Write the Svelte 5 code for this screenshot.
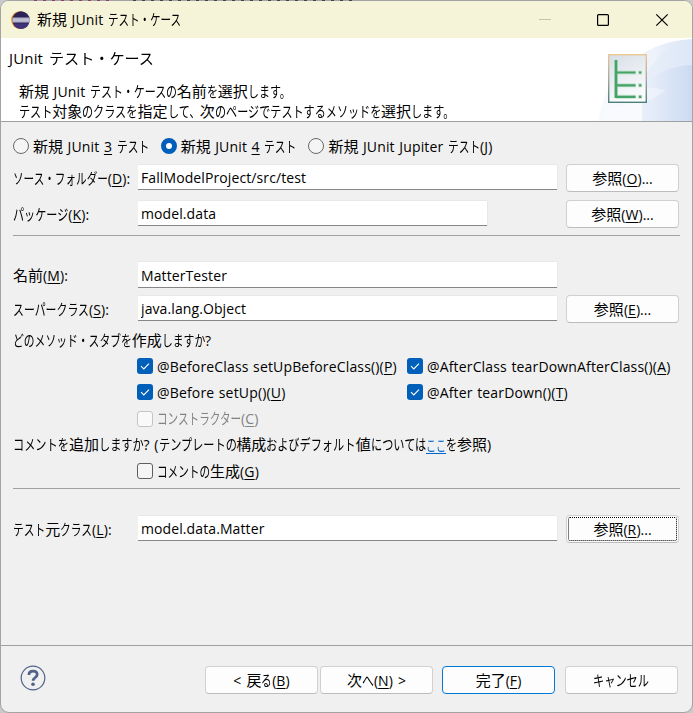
<script lang="ts">
	type Run = { text: string; kind: 'kana' | 'kanji' | 'latin' | 'key' };

	let version = $state('4');
	let sourceFolder = $state('FallModelProject/src/test');
	let packageName = $state('model.data');
	let name = $state('MatterTester');
	let superclass = $state('java.lang.Object');
	let classUnderTest = $state('model.data.Matter');

	const versions = [
		{ id: '3', label: '新規 JUnit &3 テスト' },
		{ id: '4', label: '新規 JUnit &4 テスト' },
		{ id: '5', label: '新規 JUnit Jupiter テスト(&J)' }
	];

	let stubs = $state([
		[
			{ label: '@BeforeClass setUpBeforeClass()(&P)', checked: true, disabled: false },
			{ label: '@AfterClass tearDownAfterClass()(&A)', checked: true, disabled: false }
		],
		[
			{ label: '@Before setUp()(&U)', checked: true, disabled: false },
			{ label: '@After tearDown()(&T)', checked: true, disabled: false }
		],
		[{ label: 'コンストラクター(&C)', checked: false, disabled: true }]
	]);
	let comments = $state({ label: 'コメントの生成(&G)', checked: false, disabled: false });

	// "&" marks the mnemonic letter; kana is set narrower than kanji
	function runs(text: string): Run[] {
		const parts = text.match(/&.|[\u3001-\u30ff]+|[\u3400-\u9fff]+|[^&\u3001-\u9fff]+/g) ?? [];
		return parts.map((part) => {
			if (part[0] === '&') return { text: part[1], kind: 'key' };
			if (/[\u3001-\u30ff]/.test(part)) return { text: part, kind: 'kana' };
			if (/[\u3400-\u9fff]/.test(part)) return { text: part, kind: 'kanji' };
			return { text: part, kind: 'latin' };
		});
	}
</script>

{#snippet label(text: string, pitch = 10.7)}
	<span class="label">{#each runs(text) as run}{#if run.kind === 'kana'}<span class="kana" style:--n={run.text.length} style:--pitch={pitch}>{run.text}</span>{:else}<span class={run.kind}>{run.text}</span>{/if}{/each}</span>
{/snippet}

{#snippet check(item: { label: string; checked: boolean; disabled: boolean }, pitch = 10.6)}
	<label class={['check', item.disabled && 'disabled']}>
		<input type="checkbox" bind:checked={item.checked} disabled={item.disabled} />
		<span class="box">
			{#if item.checked}
				<svg width="16" height="16" viewBox="0 0 16 16"><path d="M4 8.2 6.8 11 12 5.6" /></svg>
			{/if}
		</span>
		{@render label(item.label, pitch)}
	</label>
{/snippet}

<div class="desktop">
	<div class="window">
		<header class="titlebar">
			<svg class="eclipse" width="19" height="18" viewBox="0 0 19 18">
				<circle cx="8.8" cy="9" r="8.7" fill="#f7941e" />
				<circle cx="10" cy="9" r="8.7" fill="#2c2255" />
				<path d="M2 12.4h16a8.7 8.7 0 0 1-16 0z" fill="#41337a" />
				<path d="M1.5 6.4h17v5h-17z" fill="#b5b2cc" />
				<path d="M1.4 8.4h17.4v1H1.4z" fill="#c9c8da" />
			</svg>
			<h1>{@render label('新規 JUnit テスト・ケース', 10.5)}</h1>
			<svg class="controls" width="132" height="14" viewBox="0 0 132 14">
				<path d="M1 6.5h12" stroke="#c3c2ad" />
				<rect x="59.6" y="1.6" width="10.8" height="10.8" rx="1" />
				<path d="m118.3 1.3 11.4 11.4m0-11.4-11.4 11.4" />
			</svg>
		</header>

		<section class="banner">
			<svg class="waves" width="96" height="83" viewBox="0 0 96 83">
				<defs>
					<linearGradient id="wave">
						<stop offset="0" stop-color="#f9fbfe" />
						<stop offset=".6" stop-color="#edf2fb" />
						<stop offset="1" stop-color="#dbe5f6" />
					</linearGradient>
					<linearGradient id="wave-front">
						<stop offset="0" stop-color="#f6f9fe" />
						<stop offset=".55" stop-color="#e6edfa" />
						<stop offset="1" stop-color="#ccdaf2" />
					</linearGradient>
				</defs>
				<path d="M2 83C8 40 42 4 96 1v82z" fill="url(#wave)" />
				<path d="M45 46C58 20 74 5 96 1v26C76 28 60 34 45 46z" fill="#e0e9f8" opacity=".5" />
				<path d="M44 48C60 34 76 28 96 27v56H3l2-11C16 72 36 69 46 65 56 61 64 57 70 52z" fill="url(#wave-front)" />
				<path d="M3 83C8 66 30 66 46 65v18z" fill="#f8fafe" />
			</svg>
			<div class="banner-text">
				<h2>{@render label('JUnit テスト・ケース', 15.1)}</h2>
				<p>{@render label('新規 JUnit テスト・ケースの名前を選択します。', 10.95)}</p>
				<p>{@render label('テスト対象のクラスを指定して、次のページでテストするメソッドを選択します。', 11.1)}</p>
			</div>
			<svg class="page-icon" width="39" height="49" viewBox="0 0 39 49">
				<defs>
					<linearGradient id="sheet" x2="0.4" y2="1">
						<stop offset="0" stop-color="#d8dde7" />
						<stop offset="1" stop-color="#fafbfd" />
					</linearGradient>
					<linearGradient id="edge" x2="0" y2="1">
						<stop offset="0" stop-color="#ecc895" />
						<stop offset=".5" stop-color="#a8aaa0" />
						<stop offset="1" stop-color="#4d8078" />
					</linearGradient>
				</defs>
				<rect x=".7" y=".7" width="37.6" height="47.6" fill="url(#sheet)" stroke="url(#edge)" stroke-width="1.4" />
				<path d="M8 6v38M8 18.5h20M8 31.3h20M8 42.8h20" stroke="#c3e2cf" stroke-width="4" />
				<path d="M30 18.5h4M30 31.3h4M30 42.8h4" stroke="#c3e2cf" stroke-width="4" />
				<path d="M8 6v38" stroke="#46a367" stroke-width="2.6" />
				<path d="M8 18.5h19.5M8 31.3h19.5M8 42.8h19.5M31 18.5h2.4M31 31.3h2.4M31 42.8h2.4" stroke="#46a367" stroke-width="2.2" />
			</svg>
		</section>

		<main>
			<div class="versions">
				{#each versions as item}
					<label class="radio">
						<input type="radio" name="version" value={item.id} bind:group={version} />
						<span class="dot"></span>
						{@render label(item.label)}
					</label>
				{/each}
			</div>

			<div class="row">
				<span class="caption">{@render label('ソース・フォルダー(&D):', 10.6)}</span>
				<input class="field" bind:value={sourceFolder} />
				<button>{@render label('参照(&O)...')}</button>
			</div>
			<div class="row">
				<span class="caption">{@render label('パッケージ(&K):', 11.1)}</span>
				<input class="field short" bind:value={packageName} />
				<button>{@render label('参照(&W)...')}</button>
			</div>

			<hr />

			<div class="row name">
				<span class="caption">{@render label('名前(&M):')}</span>
				<input class="field" bind:value={name} />
			</div>
			<div class="row superclass">
				<span class="caption">{@render label('スーパークラス(&S):', 10.9)}</span>
				<input class="field" bind:value={superclass} />
				<button>{@render label('参照(&E)...')}</button>
			</div>

			<div class="question stub-question">{@render label('どのメソッド・スタブを作成しますか?', 10.8)}</div>
			<div class="stubs">
				{#each stubs as row}
					<div class="stub-row">
						{#each row as item}
							{@render check(item)}
						{/each}
					</div>
				{/each}
			</div>

			<div class="question">
				{@render label('コメントを追加しますか? (テンプレートの構成およびデフォルト値については', 11.17)}<a href="#templates">{@render label('ここ', 10)}</a>{@render label('を参照)', 11)}
			</div>
			<div class="stub-row comments">{@render check(comments)}</div>

			<hr class="second" />

			<div class="row tested">
				<span class="caption">{@render label('テスト元クラス(&L):', 10.7)}</span>
				<input class="field" bind:value={classUnderTest} />
				<button class="focused">{@render label('参照(&R)...')}</button>
			</div>
		</main>

		<footer>
			<svg class="help" width="26" height="26" viewBox="0 0 26 26">
				<circle cx="13" cy="13" r="11.8" />
				<path d="M8.9 10c0-2.6 1.7-3.9 4.2-3.9s4.1 1.4 4.1 3.5c0 3-4.1 2.9-4.1 6.2" />
				<circle class="point" cx="13" cy="19.2" r="1.8" />
			</svg>
			<button class="back">{@render label('< 戻る(&B)')}</button>
			<button class="next">{@render label('次へ(&N) >', 12)}</button>
			<button class="finish">{@render label('完了(&F)')}</button>
			<button>{@render label('キャンセル', 11.2)}</button>
		</footer>
	</div>
</div>

<style>
	:global(body) {
		margin: 0;
	}

	.desktop {
		position: relative;
		box-sizing: border-box;
		width: 693px;
		height: 713px;
		background: #c9c9c9;
	}

	/* sliver of the editor behind the window */
	.desktop::before {
		content: '';
		position: absolute;
		top: 0;
		left: 34px;
		width: 322px;
		height: 1px;
		background:
			linear-gradient(90deg, #8d3f70 75px, transparent 75px 93px, #44404c 93px),
			#a3a3a3;
		mask: repeating-linear-gradient(90deg, #000 0 3px, transparent 3px 9px);
	}

	.window {
		box-sizing: border-box;
		display: flex;
		flex-direction: column;
		width: 693px;
		height: 713px;
		overflow: hidden;
		border: 1px solid #a3a3a3;
		border-radius: 9px;
		background: #f0f0f0;
		color: #000;
		font: 15px/20px 'Noto Sans CJK JP', sans-serif;
	}

	h1,
	h2,
	p {
		margin: 0;
		font-size: 15px;
		font-weight: 400;
	}

	.label {
		display: inline-block;
		white-space: pre;
	}

	.latin,
	.key {
		font-family: 'Open Sans', sans-serif;
		font-size: 14px;
		letter-spacing: 0.16px;
		word-spacing: 0.7px;
	}

	.key {
		text-decoration: underline;
		text-underline-offset: 2px;
	}

	.kana {
		display: inline-block;
		margin-right: calc(var(--n) * (var(--pitch) - 15) * 1px);
		transform: scaleX(calc(var(--pitch) / 15));
		transform-origin: left;
	}

	.titlebar {
		display: flex;
		align-items: center;
		flex: none;
		height: 37px;
		padding: 0 22px 0 10px;
		background: #f6f4d8;
	}

	.titlebar h1 {
		margin-left: 7px;
	}

	.controls {
		margin-left: auto;
		fill: none;
		stroke: #000;
		stroke-width: 1.2;
	}

	.banner {
		position: relative;
		display: flex;
		justify-content: space-between;
		flex: none;
		height: 83px;
		padding: 0 45px 0 8px;
		border-bottom: 1px solid #a0a0a0;
		background: #fff;
	}

	.banner-text {
		padding-top: 10px;
	}

	.banner h2 {
		margin-bottom: 13px;
	}

	.banner h2 .latin {
		font-size: 15px;
		word-spacing: 1.5px;
	}

	.banner p {
		padding-left: 10px;
		line-height: 19px;
	}

	.waves {
		position: absolute;
		right: 0;
		top: 0;
	}

	.page-icon {
		position: relative;
		margin-top: 16px;
		fill: none;
	}

	main {
		padding: 10px 12px 0;
	}

	.versions {
		display: flex;
		gap: 12px;
		height: 28px;
	}

	.radio,
	.check {
		display: flex;
		align-items: center;
	}

	.radio input,
	.check input {
		position: absolute;
		opacity: 0;
	}

	.dot {
		box-sizing: border-box;
		width: 16px;
		height: 16px;
		margin-right: 4px;
		border: 1px solid #696969;
		border-radius: 50%;
		background: #f5f5f5;
	}

	.radio input:checked + .dot {
		border: 5px solid #005fb8;
		background: #fff;
	}

	.row {
		display: flex;
		align-items: center;
		height: 36px;
	}

	.caption {
		flex: none;
		width: 125px;
	}

	.field {
		box-sizing: border-box;
		width: 419px;
		height: 25px;
		margin: 0 9px 1px 0;
		padding: 1px 3px 0;
		border: 0;
		border-bottom: 1px solid #868686;
		border-radius: 0;
		outline: 0;
		background: #fff;
		box-shadow: 0 -1px #e8e8e8, 1px 0 #e8e8e8;
		color: #000;
		font: 14px 'Open Sans', sans-serif;
		letter-spacing: 0.1px;
	}

	.field.short {
		width: 349px;
		margin-right: 79px;
	}

	button {
		box-sizing: border-box;
		flex: none;
		width: 113px;
		height: 28px;
		padding: 0;
		border: 1px solid #d0d0d0;
		border-bottom-color: #bcbcbc;
		border-radius: 4px;
		background: #fdfdfd;
		color: #000;
		font: inherit;
	}

	button .latin {
		letter-spacing: 0;
		word-spacing: 1.5px;
	}

	button.focused {
		outline: 1px dotted #000;
		outline-offset: -3px;
	}

	hr {
		height: 1px;
		margin: 3px 0 0;
		border: 0;
		background: #a0a0a0;
	}

	hr.second {
		margin-top: 4px;
	}

	.row.name {
		height: 28px;
		margin-top: 25px;
	}

	.name .field {
		height: 26px;
		margin-bottom: 0;
	}

	.row.superclass {
		height: 40px;
	}

	.row.tested {
		margin-top: 22px;
	}

	.question {
		display: flex;
		align-items: center;
		height: 26px;
	}

	.question a {
		height: 17px;
		border-bottom: 1px solid #0066cc;
		color: #0066cc;
		line-height: 17px;
		text-decoration: none;
	}

	.stub-question {
		height: 24px;
	}

	.question .label {
		margin-top: -1px;
	}

	.question a .label {
		margin-top: 0;
	}

	.stub-row {
		display: grid;
		grid-template-columns: 270px 1fr;
		height: 26px;
		padding-left: 124px;
	}

	.stubs .stub-row:last-child {
		height: 27px;
	}

	.box {
		box-sizing: border-box;
		width: 16px;
		height: 16px;
		margin-right: 4px;
		border: 1px solid #5f5f5f;
		border-radius: 3px;
		background: #f5f5f5;
	}

	.check input:checked + .box {
		border: 0;
		background: #005fb8;
	}

	.box svg {
		display: block;
		fill: none;
		stroke: #fff;
		stroke-width: 1.1;
	}

	.disabled {
		color: #838383;
	}

	.disabled .box {
		border-color: #c4c4c4;
		background: #f9f9f9;
	}

	footer {
		display: flex;
		align-items: flex-start;
		height: 46px;
		margin-top: auto;
		padding: 20px 14px 0 19px;
		border-top: 1px solid #a0a0a0;
	}

	.help {
		margin: -1px auto 0 0;
		fill: none;
		stroke: #4f628a;
		stroke-width: 1.2;
	}

	.help path {
		stroke-width: 2.7;
	}

	.help .point {
		fill: #4f628a;
		stroke: none;
	}

	.back {
		margin-right: 2px;
	}

	.next {
		margin-right: 9px;
	}

	.finish {
		margin-right: 10px;
		border-color: #0078d4;
	}
</style>
